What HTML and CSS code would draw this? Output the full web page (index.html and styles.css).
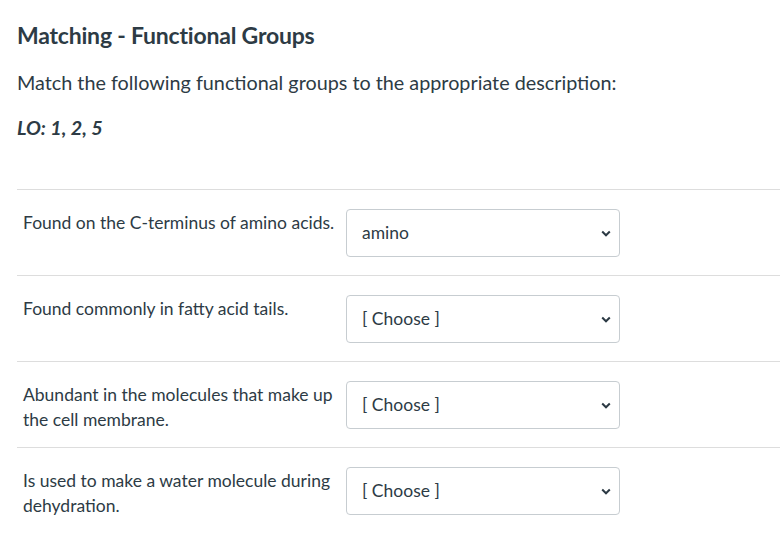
FILE: index.html
```html
<!DOCTYPE html>
<html lang="en">

<head>
    <meta charset="UTF-8">
    <meta name="viewport" content="width=device-width, initial-scale=1.0">
    <title>Matching - Functional Groups</title>
    <link rel="stylesheet" href="styles.css">
</head>

<body>
    <div class="quiz">
        <h2 class="title">Matching - Functional Groups</h2>
        <p class="intro">Match the following functional groups to the appropriate description:</p>
        <p class="lo"><em>LO: 1, 2, 5</em></p>

        <!-- answer rows -->
        <div class="answers">
            <div class="row">
                <label class="text" for="s1">Found on the C-terminus of amino acids.</label>
                <div class="pick">
                    <select id="s1">
                        <option>[ Choose ]</option>
                        <option selected>amino</option>
                    </select>
                </div>
            </div>
            <div class="row">
                <label class="text" for="s2">Found commonly in fatty acid tails.</label>
                <div class="pick">
                    <select id="s2">
                        <option>[ Choose ]</option>
                    </select>
                </div>
            </div>
            <div class="row">
                <label class="text" for="s3">Abundant in the molecules that make up the cell membrane.</label>
                <div class="pick">
                    <select id="s3">
                        <option>[ Choose ]</option>
                    </select>
                </div>
            </div>
            <div class="row">
                <label class="text" for="s4">Is used to make a water molecule during dehydration.</label>
                <div class="pick">
                    <select id="s4">
                        <option>[ Choose ]</option>
                    </select>
                </div>
            </div>
        </div>
    </div>
</body>

</html>
```

FILE: styles.css
```css
* {
    padding: 0;
    margin: 0;
    box-sizing: border-box;
}

body {
    background-color: white;
    font-family: Lato, "Open Sans", sans-serif;
    color: #2d3b45;
}

.quiz {
    padding: 21px 0 0 17px;
}

.title {
    font-size: 23px;
    font-weight: bold;
    line-height: 28px;
    letter-spacing: -0.2px;
}

.intro {
    font-size: 19.8px;
    line-height: 26px;
    margin-top: 20px;
}

.lo {
    font-size: 19.8px;
    line-height: 26px;
    margin-top: 19px;
    font-weight: bold;
}

.answers {
    margin-top: 49px;
}

.row {
    display: flex;
    align-items: flex-start;
    border-top: 1px solid #dddddd;
    padding: 19px 0 18px 6px;
}

.text {
    width: 317px;
    font-size: 17.5px;
    line-height: 25px;
    margin: 1px 0 -5px;
}

.pick {
    margin-left: 6px;
}

select {
    appearance: none;
    width: 274px;
    height: 48px;
    border: 1px solid #c7cdd1;
    border-radius: 4px;
    background: white url("data:image/svg+xml,%3Csvg xmlns='http://www.w3.org/2000/svg' width='10' height='7' viewBox='0 0 10 7'%3E%3Cpath d='M1.2 1.5l3.8 3.8 3.8-3.8' fill='none' stroke='%232d3b45' stroke-width='2'/%3E%3C/svg%3E") no-repeat right 8px center;
    font-family: Lato, "Open Sans", sans-serif;
    font-size: 17.5px;
    color: #2d3b45;
    padding: 0 30px 2px 15px;
}
```
